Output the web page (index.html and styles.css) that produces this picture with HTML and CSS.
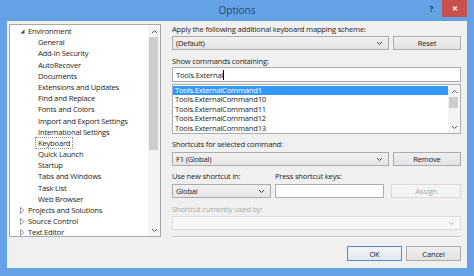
FILE: index.html
```html
<!doctype html>
<html lang="en">
 <head>
  <meta charset="UTF-8">
  <title>Options</title>
  <link rel="stylesheet" href="styles.css">
 </head>
 <body>
  <div class="window">
   <div class="titlebar">
    <span class="title">Options</span>
    <div class="controls">
     <span class="help">?</span>
     <span class="close">&#x2715;</span>
    </div>
   </div>
   <div class="client">
    <div class="tree">
     <ul class="tree-list">
      <li class="node"><svg class="twisty" width="5" height="5" viewBox="0 0 5 5"><polygon points="4.5,0.5 4.5,4.5 0.5,4.5" fill="#444"/></svg>Environment</li>
      <li class="leaf">General</li>
      <li class="leaf">Add-in Security</li>
      <li class="leaf">AutoRecover</li>
      <li class="leaf">Documents</li>
      <li class="leaf">Extensions and Updates</li>
      <li class="leaf">Find and Replace</li>
      <li class="leaf">Fonts and Colors</li>
      <li class="leaf">Import and Export Settings</li>
      <li class="leaf">International Settings</li>
      <li class="leaf"><span class="focus">Keyboard</span></li>
      <li class="leaf">Quick Launch</li>
      <li class="leaf">Startup</li>
      <li class="leaf">Tabs and Windows</li>
      <li class="leaf">Task List</li>
      <li class="leaf">Web Browser</li>
      <li class="node"><svg class="twisty" width="5" height="7" viewBox="0 0 5 7"><polygon points="0.5,0.5 4,3.5 0.5,6.5" fill="none" stroke="#999"/></svg>Projects and Solutions</li>
      <li class="node"><svg class="twisty" width="5" height="7" viewBox="0 0 5 7"><polygon points="0.5,0.5 4,3.5 0.5,6.5" fill="none" stroke="#999"/></svg>Source Control</li>
      <li class="node"><svg class="twisty" width="5" height="7" viewBox="0 0 5 7"><polygon points="0.5,0.5 4,3.5 0.5,6.5" fill="none" stroke="#999"/></svg>Text Editor</li>
     </ul>
     <div class="vscroll">
      <div class="arrow"><svg width="5" height="3" viewBox="0 0 5 3"><polyline points="0,3 2.5,0.5 5,3" fill="none" stroke="#555"/></svg></div>
      <div class="thumb tree-thumb"></div>
      <div class="track"></div>
      <div class="arrow"><svg width="5" height="3" viewBox="0 0 5 3"><polyline points="0,0 2.5,2.5 5,0" fill="none" stroke="#555"/></svg></div>
     </div>
    </div>

    <div class="pane">
     <div class="label">Apply the following additional keyboard mapping scheme:</div>
     <div class="row gap-1">
      <div class="combo wide">(Default)<svg width="5" height="3" viewBox="0 0 5 3"><polyline points="0,0 2.5,2.5 5,0" fill="none" stroke="#444"/></svg></div>
      <div class="btn">Reset</div>
     </div>

     <div class="label gap-6">Show commands containing:</div>
     <div class="input">Tools.External<span class="caret"></span></div>

     <div class="list">
      <ul class="items">
       <li class="selected">Tools.ExternalCommand1</li>
       <li>Tools.ExternalCommand10</li>
       <li>Tools.ExternalCommand11</li>
       <li>Tools.ExternalCommand12</li>
       <li>Tools.ExternalCommand13</li>
      </ul>
      <div class="vscroll">
       <div class="arrow"><svg width="5" height="3" viewBox="0 0 5 3"><polyline points="0,3 2.5,0.5 5,3" fill="none" stroke="#555"/></svg></div>
       <div class="thumb list-thumb"></div>
       <div class="track"></div>
       <div class="arrow"><svg width="5" height="3" viewBox="0 0 5 3"><polyline points="0,0 2.5,2.5 5,0" fill="none" stroke="#555"/></svg></div>
      </div>
     </div>

     <div class="label gap-5">Shortcuts for selected command:</div>
     <div class="row gap-2">
      <div class="combo wide">F1 (Global)<svg width="5" height="3" viewBox="0 0 5 3"><polyline points="0,0 2.5,2.5 5,0" fill="none" stroke="#444"/></svg></div>
      <div class="btn">Remove</div>
     </div>

     <div class="grid3 gap-5">
      <div class="label">Use new shortcut in:</div>
      <div class="label">Press shortcut keys:</div>
      <div></div>
      <div class="combo">Global<svg width="5" height="3" viewBox="0 0 5 3"><polyline points="0,0 2.5,2.5 5,0" fill="none" stroke="#444"/></svg></div>
      <div class="input short"></div>
      <div class="btn disabled">Assign</div>
     </div>

     <div class="label disabled gap-6">Shortcut currently used by:</div>
     <div class="combo off gap-1"><span></span><svg width="5" height="3" viewBox="0 0 5 3"><polyline points="0,0 2.5,2.5 5,0" fill="none" stroke="#bbb"/></svg></div>

     <div class="separator"></div>

     <div class="footer">
      <div class="btn default">OK</div>
      <div class="btn">Cancel</div>
     </div>
    </div>
   </div>
  </div>
 </body>
</html>
```
FILE: styles.css
```css
* {
  box-sizing: border-box;
}

body {
  margin: 0;
  font-family: "Open Sans", "Liberation Sans", sans-serif;
  font-size: 7.6px;
  letter-spacing: -0.2px;
  color: #1e1e1e;
}

.window {
  width: 474px;
  height: 276px;
  background: #64a2e6;
  padding: 0 7px 8px 7px;
  display: flex;
  flex-direction: column;
}

/* title bar */
.titlebar {
  height: 21px;
  flex: none;
  display: grid;
  grid-template-columns: 1fr auto 1fr;
  align-items: start;
}

.title {
  grid-column: 2;
  font-size: 10px;
  letter-spacing: 0;
  line-height: 20px;
  color: #24456d;
}

.controls {
  grid-column: 3;
  justify-self: end;
  display: flex;
  align-items: flex-start;
}

.help {
  font-size: 8px;
  font-weight: bold;
  color: #1d3a5f;
  line-height: 18px;
  margin-right: 9px;
}

.close {
  width: 25px;
  height: 17px;
  background: #c8514c;
  color: #fff;
  font-size: 7px;
  font-weight: bold;
  display: flex;
  align-items: center;
  justify-content: center;
}

/* client area */
.client {
  flex: 1;
  background: #f0f0f0;
  display: flex;
  gap: 11px;
  padding: 3px 6px 0 2px;
}

.tree {
  width: 152px;
  height: 213px;
  flex: none;
  border: 1px solid #a8a8a8;
  background: #fff;
  display: flex;
}

.tree-list {
  flex: 1;
  list-style: none;
  margin: 0;
  padding: 1px 0 0 0;
  overflow: hidden;
}

.tree-list li {
  height: 11.2px;
  line-height: 11.2px;
  white-space: nowrap;
}

.node {
  padding-left: 10px;
  display: flex;
  align-items: center;
}

.twisty {
  margin-right: 3px;
}

.leaf {
  padding-left: 28px;
}

.focus {
  border: 1px dotted #8c8c8c;
  padding: 0 2px;
  margin-left: -3px;
}

.vscroll {
  width: 12px;
  flex: none;
  background: #f4f4f4;
  display: flex;
  flex-direction: column;
}

.arrow {
  height: 12px;
  display: flex;
  align-items: center;
  justify-content: center;
}

.thumb {
  background: #cdcdcd;
  margin: 0 2px 0 1px;
}

.tree-thumb {
  height: 113px;
}

.list-thumb {
  height: 11px;
}

.track {
  flex: 1;
}

/* right pane */
.pane {
  flex: 1;
  display: flex;
  flex-direction: column;
}

.label {
  line-height: 11px;
  height: 11px;
  white-space: nowrap;
}

.label.disabled {
  color: #a9a9a9;
}

.row {
  display: flex;
  gap: 4px;
}

.gap-1 { margin-top: 1px; }
.gap-2 { margin-top: 2px; }
.gap-5 { margin-top: 5px; }
.gap-6 { margin-top: 6px; }

.combo {
  height: 14px;
  border: 1px solid #acacac;
  background: linear-gradient(#f0f0f0, #e5e5e5);
  display: flex;
  align-items: center;
  justify-content: space-between;
  padding: 0 6px 0 3px;
}

.combo.wide {
  flex: 1;
}

.combo.off {
  background: #f6f6f6;
  border-color: #dcdcdc;
}

.btn {
  width: 68px;
  height: 14px;
  border: 1px solid #acacac;
  background: linear-gradient(#efefef, #e3e3e3);
  display: flex;
  align-items: center;
  justify-content: center;
}

.btn.disabled {
  color: #a9a9a9;
  background: #f4f4f4;
  border-color: #d9d9d9;
}

.btn.default {
  border-color: #4b8fd0;
  background: linear-gradient(#f2f5f8, #e4e8ec);
}

.input {
  height: 15px;
  border: 1px solid #abadb3;
  background: #fff;
  padding: 0 3px;
  display: flex;
  align-items: center;
}

.input.short {
  height: 14px;
}

.caret {
  width: 1px;
  height: 10px;
  background: #000;
}

.list {
  margin-top: 2px;
  height: 50px;
  border: 1px solid #abadb3;
  background: #fff;
  display: flex;
}

.items {
  flex: 1;
  list-style: none;
  margin: 0;
  padding: 1px 0 0 0;
  overflow: hidden;
}

.items li {
  height: 9.4px;
  line-height: 9.4px;
  padding-left: 2px;
  white-space: nowrap;
}

.items li.selected {
  background: #3399ff;
  color: #fff;
}

.grid3 {
  display: grid;
  grid-template-columns: 99px 109px 1fr;
  column-gap: 4px;
  row-gap: 2px;
}

.grid3 .btn {
  width: auto;
  margin-left: 3px;
}

.separator {
  margin-top: 6px;
  height: 2px;
  border-top: 1px solid #c6c6c6;
  border-bottom: 1px solid #fff;
}

.footer {
  margin-top: 8px;
  display: flex;
  justify-content: flex-end;
  gap: 4px;
}

.footer .btn {
  width: 55px;
  height: 15px;
}
```
